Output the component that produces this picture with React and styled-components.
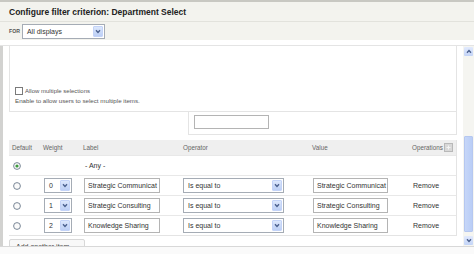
import React from 'react';
import styled, { createGlobalStyle } from 'styled-components';

const Global = createGlobalStyle`
  html, body { margin: 0; padding: 0; background: #fff; }
  body { font-family: "Liberation Sans", Arial, sans-serif; color: #333; }
  * { box-sizing: border-box; }
`;

const Frame = styled.div`
  width: 474px;
  height: 254px;
  overflow: hidden;
  display: flex;
  flex-direction: column;
  border-top: 2px solid #c8c8c2;
  background: #fff;
`;

const TitleBar = styled.div`
  height: 20px;
  flex: none;
  background: #f3f3ee;
  border-bottom: 1px solid #e2e2dc;
  display: flex;
  align-items: center;
  padding-left: 9px;
  font-weight: bold;
  font-size: 8.5px;
  color: #222;
`;

const ForRow = styled.div`
  height: 18px;
  flex: none;
  background: #f3f3ee;
  display: flex;
  align-items: center;
  gap: 2px;
  padding-left: 9px;
`;

const ForLabel = styled.span`
  font-size: 5.2px;
  font-weight: bold;
  color: #555;
  text-transform: uppercase;
`;

const Gap = styled.div`
  height: 5px;
  flex: none;
`;

const Body = styled.div`
  height: 201px;
  flex: none;
  display: flex;
  border-top: 1px solid #e4e4e4;
`;

const LeftStrip = styled.div`
  width: 3px;
  flex: none;
  background: #d2d2d0;
`;

const Scroll = styled.div`
  flex: 1;
  overflow: hidden;
  display: flex;
  flex-direction: column;
  padding: 0 6px;
`;

const WidgetBox = styled.div`
  height: 66px;
  flex: none;
  border: 1px solid #e4e4e4;
  border-top: none;
  display: flex;
  flex-direction: column;
  justify-content: flex-end;
  padding: 0 0 6px 5px;
`;

const CheckRow = styled.label`
  display: flex;
  align-items: center;
  gap: 2px;
  height: 9px;
  font-size: 6px;
  color: #555;
`;

const CheckBox = styled.span`
  width: 8px;
  height: 8px;
  border: 1px solid #7a7a7a;
  background: #fff;
  flex: none;
`;

const Desc = styled.div`
  margin-top: 2px;
  line-height: 8px;
  font-size: 6.2px;
  color: #555;
`;

const SubBox = styled.div`
  height: 23px;
  flex: none;
  margin-left: 179px;
  border: 1px solid #e4e4e4;
  border-top: none;
  padding: 3px 0 0 5px;
`;

const TextBox = styled.div`
  width: ${p => p.$w}px;
  height: ${p => p.$h || 15}px;
  border: 1px solid #b4b4b4;
  background: #fff;
  font-size: 7px;
  color: #333;
  display: flex;
  align-items: center;
  padding-left: 3px;
  white-space: nowrap;
  overflow: hidden;
`;

const Table = styled.div`
  margin-top: 5px;
  flex: none;
  border: 1px solid #e4e4e4;
  border-top: none;
  border-left: none;
`;

const Row = styled.div`
  display: grid;
  grid-template-columns: 31px 40px 100px 129px 100px 1fr;
  height: ${p => (p.$head ? 15 : 20)}px;
  background: ${p => (p.$head ? '#efefef' : '#fff')};
  border-top: ${p => (p.$head ? 'none' : '1px solid #e8e8e8')};
  align-items: center;
`;

const HeadCell = styled.div`
  padding-left: 3px;
  font-size: 6.3px;
  color: #666;
  display: flex;
  align-items: center;
  white-space: nowrap;
`;

const Cell = styled.div`
  padding-left: ${p => p.$pl ?? 4}px;
  display: flex;
  align-items: center;
  font-size: 7px;
  color: #333;
  white-space: nowrap;
`;

const SelectBox = styled.div`
  width: ${p => p.$w}px;
  height: ${p => p.$h || 15}px;
  border: 1px solid #a5acb5;
  background: #fff;
  display: flex;
  align-items: center;
  justify-content: space-between;
  padding: 1px 1px 1px 4px;
  font-size: 7px;
  color: #333;
  white-space: nowrap;
`;

const ArrowBtn = styled.span`
  width: 10px;
  height: 100%;
  flex: none;
  background: linear-gradient(#dce7fc, #bccff5);
  border: 1px solid #c3d3f8;
  border-radius: 1px;
  display: flex;
  align-items: center;
  justify-content: center;
`;

const AddButton = styled.div`
  margin-top: 3px;
  width: 76px;
  height: 14px;
  flex: none;
  border: 1px solid #d8d8d8;
  border-radius: 2px;
  background: #f8f8f8;
  font-size: 7px;
  color: #444;
  padding: 3px 0 0 6px;
`;

const Scrollbar = styled.div`
  width: 11px;
  flex: none;
  background: #f5f5f1;
  display: flex;
  flex-direction: column;
  padding: 1px 1px;
`;

const SbBtn = styled.div`
  height: 9px;
  flex: none;
  background: linear-gradient(#e2eafd, #c3d4f7);
  border-radius: 1px;
  display: flex;
  align-items: center;
  justify-content: center;
`;

const SbTrack = styled.div`
  flex: 1;
  display: flex;
  flex-direction: column;
  padding: 80px 0 4px;
`;

const SbThumb = styled.div`
  flex: 1;
  background: linear-gradient(90deg, #c6d6f8, #b9cdf6);
  border: 1px solid #b5c7f0;
  border-radius: 1px;
`;

const Footer = styled.div`
  flex: 1;
  border-top: 1px solid #d8d8d8;
  background: #fafafa;
`;

const OpsIcon = styled.span`
  width: 9px;
  height: 9px;
  margin-left: 1px;
  border: 1px solid #b8b8b8;
  background: #d8d8d8;
  display: inline-flex;
  align-items: center;
  justify-content: center;
`;

const Chevron = ({ up }) => (
  <svg width="6" height="5" viewBox="0 0 6 5">
    <polyline
      points={up ? '1,3.8 3,1.5 5,3.8' : '1,1.2 3,3.5 5,1.2'}
      fill="none"
      stroke="#4a5f8c"
      strokeWidth="1.3"
    />
  </svg>
);

const Radio = ({ checked }) => (
  <svg width="8" height="8" viewBox="0 0 8 8">
    <circle cx="4" cy="4" r="3.4" fill="#fafafa" stroke="#6b7b8b" strokeWidth="0.9" />
    {checked && <circle cx="4" cy="4" r="1.6" fill="#3d9a3d" />}
  </svg>
);

const Select = ({ w, children }) => (
  <SelectBox $w={w}>
    <span>{children}</span>
    <ArrowBtn>
      <Chevron />
    </ArrowBtn>
  </SelectBox>
);

const rows = [
  { weight: '0', label: 'Strategic Communicat', value: 'Strategic Communicat' },
  { weight: '1', label: 'Strategic Consulting', value: 'Strategic Consulting' },
  { weight: '2', label: 'Knowledge Sharing', value: 'Knowledge Sharing' },
];

export default function App() {
  return (
    <>
      <Global />
      <Frame>
        <TitleBar>Configure filter criterion: Department Select</TitleBar>
        <ForRow>
          <ForLabel>For</ForLabel>
          <Select w={83}>All displays</Select>
        </ForRow>
        <Gap />
        <Body>
          <LeftStrip />
          <Scroll>
            <WidgetBox>
              <CheckRow>
                <CheckBox />
                Allow multiple selections
              </CheckRow>
              <Desc>Enable to allow users to select multiple items.</Desc>
            </WidgetBox>
            <SubBox>
              <TextBox $w={75} $h={14} />
            </SubBox>
            <Table>
              <Row $head>
                <HeadCell>Default</HeadCell>
                <HeadCell>Weight</HeadCell>
                <HeadCell>Label</HeadCell>
                <HeadCell>Operator</HeadCell>
                <HeadCell>Value</HeadCell>
                <HeadCell>
                  Operations
                  <OpsIcon>
                    <svg width="5" height="5" viewBox="0 0 5 5">
                      <path d="M2.5 0.5v4M0.5 2.5h4" stroke="#f4f4f4" strokeWidth="1" />
                    </svg>
                  </OpsIcon>
                </HeadCell>
              </Row>
              <Row>
                <Cell>
                  <Radio checked />
                </Cell>
                <Cell />
                <Cell $pl={5}>- Any -</Cell>
                <Cell />
                <Cell />
                <Cell />
              </Row>
              {rows.map(r => (
                <Row key={r.weight}>
                  <Cell>
                    <Radio />
                  </Cell>
                  <Cell>
                    <Select w={28}>{r.weight}</Select>
                  </Cell>
                  <Cell>
                    <TextBox $w={76}>{r.label}</TextBox>
                  </Cell>
                  <Cell $pl={3}>
                    <Select w={101}>Is equal to</Select>
                  </Cell>
                  <Cell>
                    <TextBox $w={75}>{r.value}</TextBox>
                  </Cell>
                  <Cell>Remove</Cell>
                </Row>
              ))}
            </Table>
            <AddButton>Add another item</AddButton>
          </Scroll>
          <Scrollbar>
            <SbBtn>
              <Chevron up />
            </SbBtn>
            <SbTrack>
              <SbThumb />
            </SbTrack>
            <SbBtn>
              <Chevron />
            </SbBtn>
          </Scrollbar>
        </Body>
        <Footer />
      </Frame>
    </>
  );
}
